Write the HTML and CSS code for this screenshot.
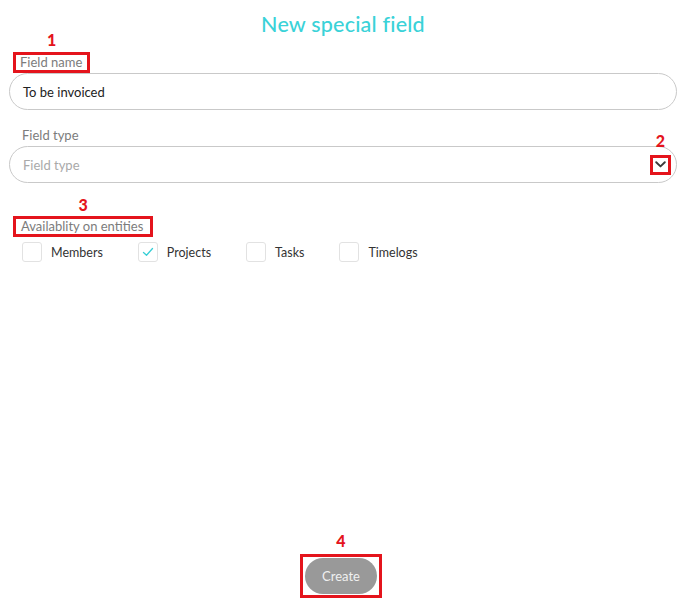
FILE: index.html
```html
<!DOCTYPE html>
<html lang="en">
<head>
<meta charset="utf-8">
<title>New special field</title>
<link rel="stylesheet" href="styles.css">
</head>
<body>
<main class="page">
  <h1 class="title">New special field</h1>

  <section class="field">
    <div class="annot">
      <span class="num">1</span>
      <span class="lbl boxed">Field name</span>
    </div>
    <div class="control">To be invoiced</div>
  </section>

  <section class="field field-type">
    <span class="lbl">Field type</span>
    <div class="control select">
      <span class="placeholder">Field type</span>
      <span class="chev boxed">
        <span class="num num-over">2</span>
        <svg width="11" height="7" viewBox="0 0 11 7"><path d="M1.2 1.2 L5.5 5.4 L9.8 1.2" fill="none" stroke="#3a3a3a" stroke-width="1.9" stroke-linecap="round" stroke-linejoin="round"/></svg>
      </span>
    </div>
  </section>

  <section class="field field-avail">
    <div class="annot">
      <span class="num">3</span>
      <span class="lbl boxed">Availablity on entities</span>
    </div>
    <div class="checks">
      <label class="check"><span class="box"></span><span class="check-text">Members</span></label>
      <label class="check"><span class="box checked"><svg width="12" height="10" viewBox="0 0 12 10"><path d="M1.5 5.5 L4.5 8.3 L10.5 1.5" fill="none" stroke="#38cfd6" stroke-width="1.3" stroke-linecap="round" stroke-linejoin="round"/></svg></span><span class="check-text">Projects</span></label>
      <label class="check"><span class="box"></span><span class="check-text">Tasks</span></label>
      <label class="check"><span class="box"></span><span class="check-text">Timelogs</span></label>
    </div>
  </section>

  <footer class="footer">
    <div class="annot annot-center">
      <span class="num">4</span>
      <span class="btn-wrap boxed"><button class="btn" type="button">Create</button></span>
    </div>
  </footer>
</main>
</body>
</html>
```

FILE: styles.css
```css
* { box-sizing: border-box; }
html, body { margin: 0; padding: 0; background: #fff; }
body { font-family: "Lato", "Noto Sans", sans-serif; color: #333; }

.page {
  min-height: 605px;
  padding: 15px 13px 7px 9px;
  display: flex;
  flex-direction: column;
}

.title {
  margin: 0;
  text-align: center;
  font-size: 21.5px;
  line-height: 19px;
  font-weight: 500;
  color: #3ad2d8;
  letter-spacing: 0.2px;
}

.annot {
  display: inline-flex;
  flex-direction: column;
  align-items: center;
  align-self: flex-start;
}
.annot-center { align-self: center; }

.num {
  font-size: 16px;
  line-height: 12px;
  font-weight: 900;
  color: #e4141c;
  margin-bottom: 6px;
}

.field { display: flex; flex-direction: column; }
.field .annot { margin-left: 4px; }

.lbl {
  font-size: 13px;
  line-height: 15px;
  color: #7c7c7c;
  padding: 3px 3px 3px 13px;
}
.lbl.boxed {
  padding: 0 5px 0 4px;
  border: 3px solid #e4141c;
}
.field-avail .lbl.boxed { padding: 0 7px 0 5px; }

.control {
  height: 37px;
  border: 1px solid #c9c9c9;
  border-radius: 19px;
  padding: 0 13px;
  display: flex;
  align-items: center;
  font-size: 13px;
  color: #222;
}

.field-type { margin-top: 15px; }

.select { justify-content: space-between; padding-right: 5px; }
.placeholder { color: #a9a9a9; }

.chev {
  position: relative;
  width: 21px;
  height: 20px;
  border: 3px solid #e4141c;
  display: flex;
  align-items: center;
  justify-content: center;
}
.num-over {
  position: absolute;
  left: 50%;
  bottom: calc(100% + 11px);
  transform: translateX(-50%);
  margin: 0;
}

.field-avail { margin-top: 16px; }
.field-avail .num { margin-bottom: 5px; }

.checks {
  display: flex;
  gap: 35px;
  margin-top: 5px;
  padding-left: 13px;
}
.check {
  display: flex;
  align-items: center;
  gap: 9px;
  font-size: 12.5px;
  color: #333;
}
.box {
  width: 20px;
  height: 20px;
  border: 1px solid #e2e2e2;
  border-radius: 3px;
  display: flex;
  align-items: center;
  justify-content: center;
}

.footer {
  margin-top: auto;
  display: flex;
  justify-content: center;
  padding-right: 4px;
}
.footer .num { margin-bottom: 7px; }

.btn-wrap {
  display: block;
  padding: 1px 2px;
  border: 3px solid #e4141c;
}
.btn {
  display: block;
  height: 36px;
  padding: 0 17px;
  border: none;
  border-radius: 18px;
  background: #999999;
  color: #f0f0f0;
  font-family: inherit;
  font-size: 13px;
}
```
